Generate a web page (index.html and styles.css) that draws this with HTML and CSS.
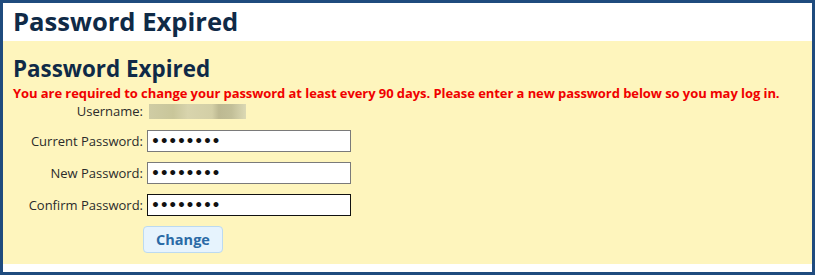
FILE: index.html
```html
<!DOCTYPE html>
<html lang="en">
<head>
    <meta charset="UTF-8">
    <title>Password Expired</title>
    <link rel="stylesheet" href="styles.css">
</head>
<body>

<div class="frame">
    <div class="header">
        <h1>Password Expired</h1>
    </div>

    <div class="content">
        <h2>Password Expired</h2>
        <p class="warning">You are required to change your password at least every 90 days. Please enter a new password below so you may log in.</p>

        <div class="form">
            <label>Username:</label>
            <div class="username"></div>

            <label for="current">Current Password:</label>
            <input type="password" id="current" value="12345678">

            <label for="newpass">New Password:</label>
            <input type="password" id="newpass" value="12345678">

            <label for="confirm">Confirm Password:</label>
            <input type="password" id="confirm" class="active" value="12345678">

            <span></span>
            <div class="actions">
                <button class="change-button">Change</button>
            </div>
        </div>
    </div>
</div>

</body>
</html>
```

FILE: styles.css
```css
body {
    margin: 0;
    font-family: 'Open Sans', 'Noto Sans', sans-serif;
}

.frame {
    height: 275px;
    box-sizing: border-box;
    border: 3px solid #1f4b7e;
    background-color: #ffffff;
    padding-bottom: 8px;
    display: flex;
    flex-direction: column;
}

.header {
    height: 38px;
    padding-left: 10px;
}

.header h1 {
    margin: 0;
    font-size: 25.6px;
    line-height: 38px;
    color: #0f2a47;
    font-weight: bold;
}

.content {
    flex: 1;
    background-color: #fef5bd;
    padding: 0 10px;
}

.content h2 {
    margin: 0;
    padding-top: 13px;
    font-size: 22.4px;
    line-height: 30px;
    color: #0f2a47;
}

.warning {
    margin: 1px 0 0 0;
    font-size: 13px;
    line-height: 16px;
    font-weight: bold;
    letter-spacing: -0.07px;
    color: #f00000;
}

.form {
    margin-top: 1px;
    display: grid;
    grid-template-columns: 130px 204px;
    column-gap: 4px;
    row-gap: 10px;
    align-items: center;
}

.form label {
    text-align: right;
    font-size: 13px;
    color: #2b2b2b;
}

.username {
    width: 97px;
    height: 15px;
    margin-left: 2px;
    background: linear-gradient(to right, #cfcca4 0%, #c9c69a 25%, #d8d4ad 40%, #d3cfa6 65%, #bdb992 72%, #c2bf98 85%, #dcd9b4 100%);
}

.form input {
    height: 22px;
    box-sizing: border-box;
    border: 1px solid #7a7a7a;
    padding: 0 3px;
    font-size: 14px;
    font-weight: bold;
    font-family: 'DejaVu Sans', sans-serif;
    letter-spacing: -0.3px;
    color: #111;
    background-color: #ffffff;
    outline: none;
}

.form input.active {
    border-color: #111111;
}

.actions {
    margin-left: -4px;
}

.change-button {
    width: 80px;
    height: 27px;
    background-color: #e6f3fd;
    border: 1px solid #bcdaf0;
    border-radius: 4px;
    color: #2a6aa6;
    font-family: 'Open Sans', sans-serif;
    font-size: 14.5px;
    font-weight: bold;
}
```
